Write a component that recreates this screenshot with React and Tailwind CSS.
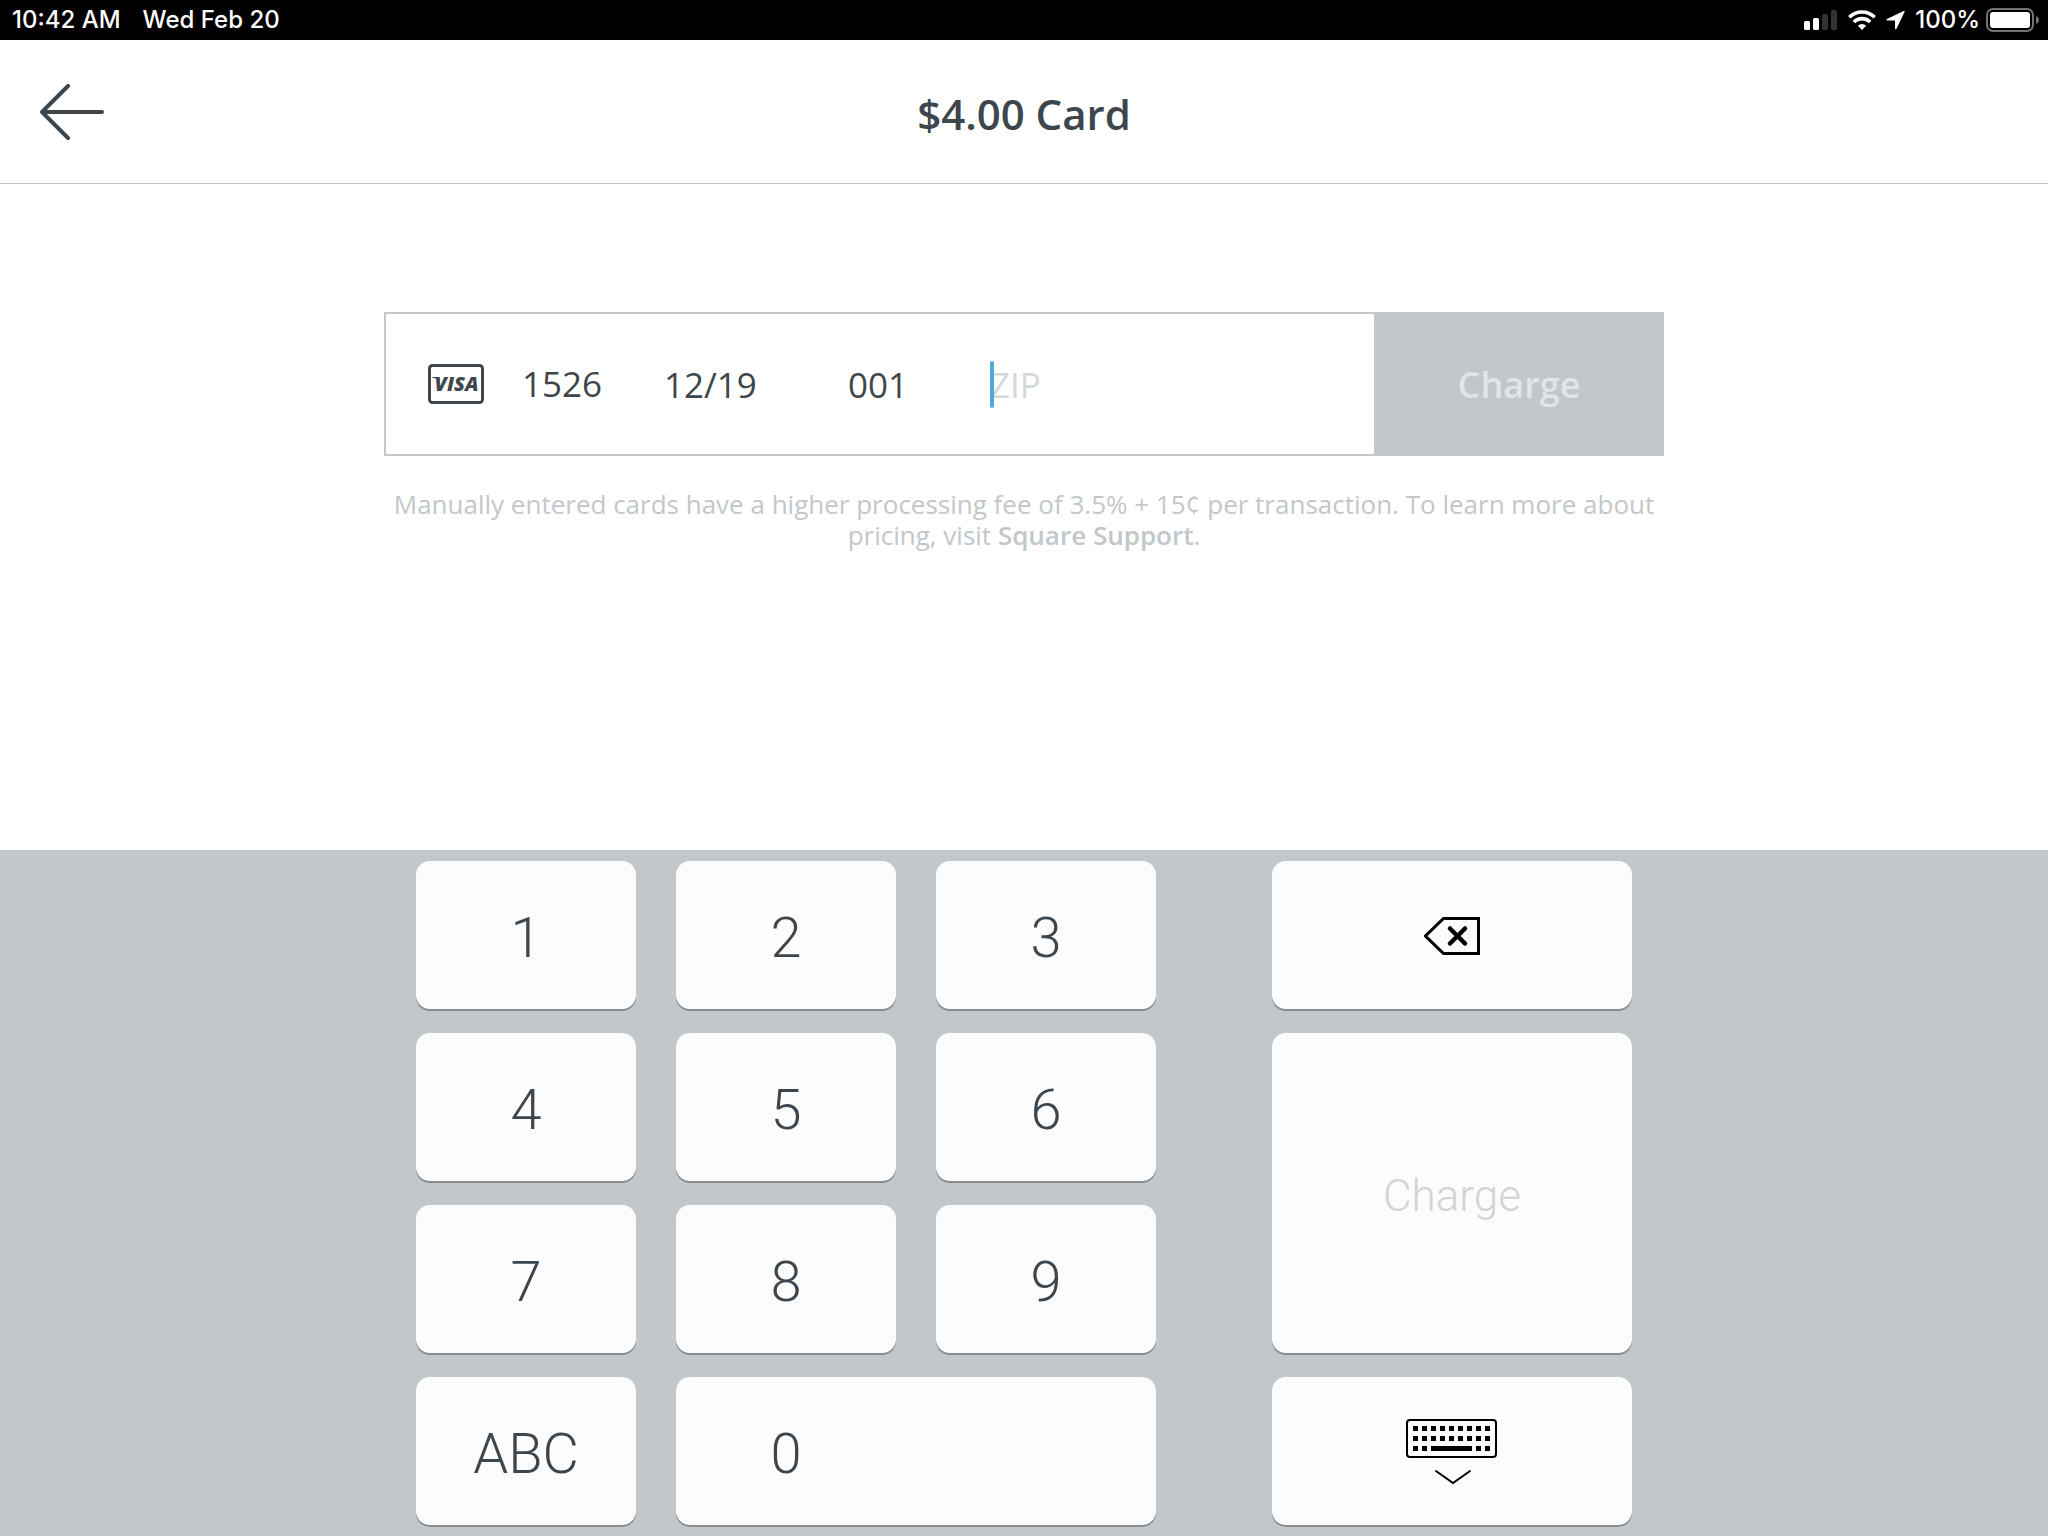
import React, { useState } from 'react';

const digits = ['1', '2', '3', '4', '5', '6', '7', '8', '9'];

const keyStyle = 'rounded-[14px] bg-[#fcfcfc] text-[#3d464d] shadow-[0_2px_0_#868b8f] flex items-center justify-center font-light';

const StatusBar = () => (
  <div className="flex h-10 items-center justify-between bg-black pl-3 pr-2 font-['Inter',sans-serif] text-2xl font-medium text-white">
    <div className="flex gap-[22px]">
      <span>10:42 AM</span>
      <span>Wed Feb 20</span>
    </div>
    <div className="flex items-center gap-2.5">
      <svg width="34" height="20" viewBox="0 0 34 20" fill="#fff" aria-hidden="true">
        <rect x="0" y="11" width="6" height="9" rx="1.5" />
        <rect x="9" y="8" width="6" height="12" rx="1.5" />
        <rect x="18" y="4" width="6" height="16" rx="1.5" fill="#333" />
        <rect x="27" y="0" width="6" height="20" rx="1.5" fill="#333" />
      </svg>
      <svg width="28" height="20" viewBox="0 0 28 20" fill="none" stroke="#fff" strokeWidth="3.6" aria-hidden="true">
        <path d="M1.3 7.3a18 18 0 0 1 25.4 0" />
        <path d="M5.8 12a11.6 11.6 0 0 1 16.4 0" />
        <path d="M14 20l-4.1-4.2a5.8 5.8 0 0 1 8.2 0z" fill="#fff" stroke="none" />
      </svg>
      <svg width="19" height="20" viewBox="0 0 19 20" fill="#fff" aria-hidden="true">
        <path d="M17.6.9 1 9c-1 .5-.8 1.5.3 1.5h7.2c.4 0 .5.1.5.5v7.3c0 1 1.1 1.2 1.6.2L18.5 1.9c.3-.8-.2-1.300-.9-1z" />
      </svg>
      <div className="flex items-center gap-1.5">
        <span>100%</span>
        <svg width="54" height="24" viewBox="0 0 54 24" aria-hidden="true">
          <rect x="1" y="1" width="46" height="22" rx="6" fill="none" stroke="#737373" strokeWidth="2" />
          <rect x="4" y="4" width="40" height="16" rx="3" fill="#fff" />
          <path d="M50 8c2 .6 3 2.3 3 4s-1 3.4-3 4z" fill="#737373" />
        </svg>
      </div>
    </div>
  </div>
);

const VisaIcon = () => (
  <svg width="56" height="40" viewBox="0 0 56 40" className="shrink-0" role="img" aria-label="Visa">
    <rect x="1.5" y="1.5" width="53" height="37" rx="3" fill="none" stroke="#3d464d" strokeWidth="3" />
    <path d="M4 13h6l2 5c-2-2.500-5-4-8-4.500z" fill="#3d464d" />
    <text x="28.500" y="27" textAnchor="middle" fontSize="20" fontWeight="800" fontStyle="italic" fontFamily="Open Sans, sans-serif" fill="#3d464d">
      VISA
    </text>
  </svg>
);

const BackspaceIcon = () => (
  <svg width="56" height="38" viewBox="0 0 56 38" fill="none" stroke="#000" aria-hidden="true">
    <path d="M19.5 1.500h35v35h-35L1.500 19z" strokeWidth="3" />
    <path d="M26 11.500l15 15M41 11.500l-15 15" strokeWidth="4.500" strokeLinecap="round" />
  </svg>
);

const HideKeyboardIcon = () => {
  const cols = [0, 1, 2, 3, 4, 5, 6, 7, 8];
  return (
    <svg width="92" height="66" viewBox="0 0 92 66" aria-hidden="true">
      <rect x="1" y="1" width="89" height="37" rx="3" fill="none" stroke="#000" strokeWidth="2" />
      {cols.map((c) => (
        <g key={c}>
          <rect x={7 + c * 9} y="7" width="5" height="5" />
          <rect x={7 + c * 9} y="17" width="5" height="5" />
          {(c < 2 || c > 6) && <rect x={7 + c * 9} y="27" width="5" height="5" />}
        </g>
      ))}
      <rect x="25" y="27" width="41" height="5" />
      <path d="M30 52l17 12 17-12" fill="none" stroke="#000" strokeWidth="2" strokeLinecap="round" />
    </svg>
  );
};

const Keypad = ({ onDigit, onDelete }) => (
  <div className="bg-[#c2c7cb] px-8 py-[11px] font-['Roboto',sans-serif] text-[56px] leading-none">
    <div className="mx-auto flex max-w-[1216px] gap-[116px]">
      <div className="grid flex-1 auto-rows-[148px] grid-cols-3 gap-x-10 gap-y-6">
        {digits.map((d) => (
          <button key={d} type="button" className={`${keyStyle} pt-1.5`} onClick={() => onDigit(d)}>
            {d}
          </button>
        ))}
        <button type="button" className={`${keyStyle} pt-1.5`}>ABC</button>
        <button
          type="button"
          className="col-span-2 grid grid-cols-2 items-center gap-x-10 rounded-[14px] bg-[#fcfcfc] pt-1.5 text-center font-light text-[#3d464d] shadow-[0_2px_0_#868b8f]"
          onClick={() => onDigit('0')}
        >
          <span>0</span>
        </button>
      </div>
      <div className="grid w-[360px] auto-rows-[148px] gap-y-6">
        <button type="button" aria-label="Delete" className={`${keyStyle} pt-0.5`} onClick={onDelete}>
          <BackspaceIcon />
        </button>
        <button
          type="button"
          disabled
          className="row-span-2 rounded-[14px] bg-[#fcfcfc] pt-1.5 text-[44px] font-light text-[#d3d3d3] shadow-[0_2px_0_#868b8f]"
        >
          Charge
        </button>
        <button type="button" aria-label="Hide keyboard" className={`${keyStyle} pt-0.5`}>
          <HideKeyboardIcon />
        </button>
      </div>
    </div>
  </div>
);

const App = () => {
  const [card, setCard] = useState('1526');
  const [expiry, setExpiry] = useState('12/19');
  const [cvv, setCvv] = useState('001');
  const [zip, setZip] = useState('');

  return (
    <div className="flex min-h-screen flex-col bg-white font-['Open_Sans',sans-serif] text-[#3d464d]">
      <StatusBar />

      <header className="grid h-36 grid-cols-[1fr_auto_1fr] items-center border-b border-[#c2c4c5] px-10">
        <button type="button" aria-label="Back" className="justify-self-start">
          <svg width="64" height="56" viewBox="0 0 64 56" fill="none" stroke="#3d464d" strokeWidth="4" strokeLinecap="round" strokeLinejoin="round">
            <path d="M28 2L2 28l26 26M2 28h60" />
          </svg>
        </button>
        <h1 className="pt-1 text-[42px] font-semibold">$4.00 Card</h1>
      </header>

      <main className="flex-1 px-8 pt-32">
        <div className="mx-auto max-w-[1280px]">
          <form className="flex h-36 text-[35px]" onSubmit={(e) => e.preventDefault()}>
            <div className="flex flex-1 items-center border-2 border-r-0 border-[#c2c7cb] pl-[42px]">
              <VisaIcon />
              <input
                aria-label="Card number"
                className="ml-[38px] w-[142px] outline-none"
                value={card}
                onChange={(e) => setCard(e.target.value)}
              />
              <input
                aria-label="Expiration date"
                className="w-[184px] pt-0.5 outline-none"
                value={expiry}
                onChange={(e) => setExpiry(e.target.value)}
              />
              <input
                aria-label="CVV"
                className="w-[142px] pt-0.5 outline-none"
                value={cvv}
                onChange={(e) => setCvv(e.target.value)}
              />
              <div className="relative flex flex-1 items-center">
                <input
                  aria-label="ZIP code"
                  placeholder="ZIP"
                  className="w-full pt-0.5 caret-transparent outline-none placeholder:text-[#d5d8db]"
                  value={zip}
                  onChange={(e) => setZip(e.target.value)}
                />
                {zip === '' && <span className="absolute left-0 h-[47px] w-1 rounded-full bg-[#4fa9d8]" />}
              </div>
            </div>
            <button type="submit" disabled className="w-[290px] bg-[#c2c7cb] pt-0.5 text-4xl font-semibold text-[#e2e4e6]">
              Charge
            </button>
          </form>

          <p className="mt-[33px] text-center text-[26px] leading-[31px] text-[#c2c7cb]">
            Manually entered cards have a higher processing fee of 3.5% + 15¢ per transaction. To learn more about pricing, visit{' '}
            <a href="#support" className="font-semibold">Square Support</a>.
          </p>
        </div>
      </main>

      <Keypad onDigit={(d) => setZip(zip + d)} onDelete={() => setZip(zip.slice(0, -1))} />
    </div>
  );
};

export default App;
